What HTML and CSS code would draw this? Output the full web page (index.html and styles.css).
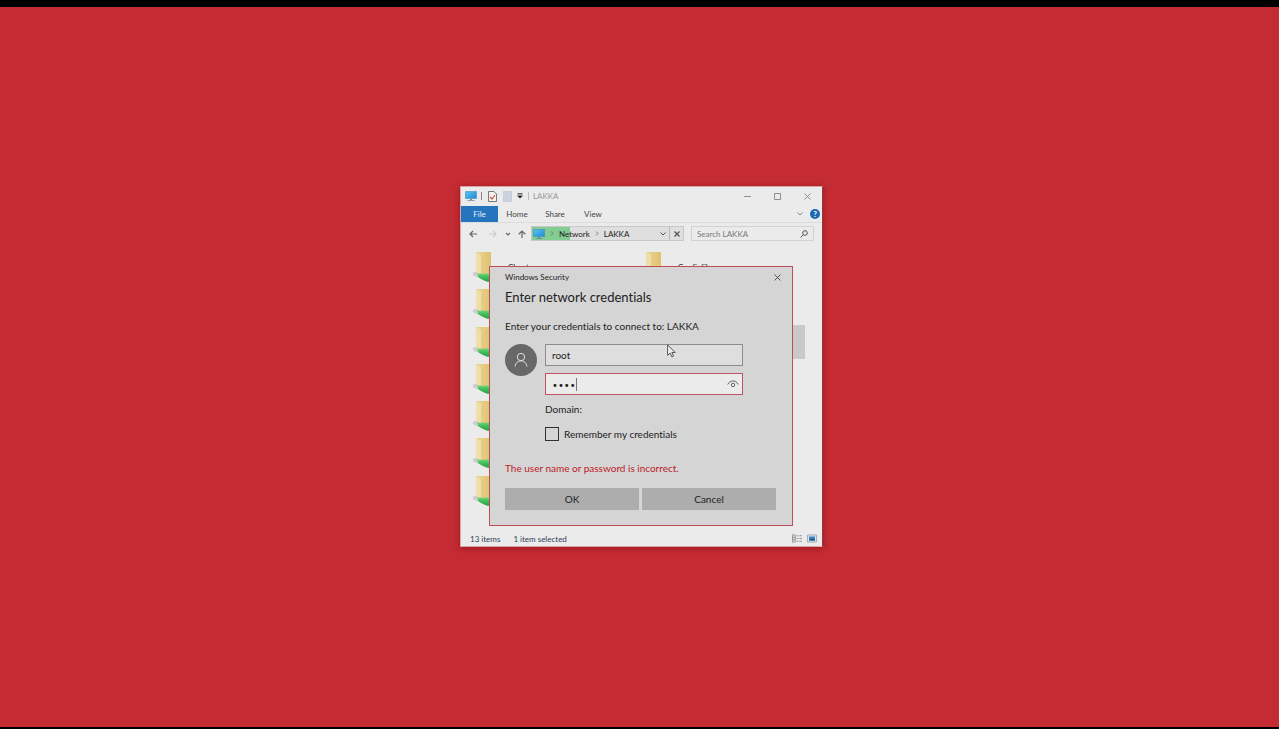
FILE: index.html
```html
<!DOCTYPE html>
<html lang="en">
<head>
<meta charset="utf-8">
<title>LAKKA</title>
<link rel="stylesheet" href="styles.css">
</head>
<body>
<svg class="defs" aria-hidden="true">
  <defs>
    <linearGradient id="blue" x1="0" y1="0" x2="1" y2="1"><stop offset="0" stop-color="#58c4ef"/><stop offset="1" stop-color="#2489cf"/></linearGradient>
    <linearGradient id="gold" x1="0" y1="0" x2="1" y2="0"><stop offset="0" stop-color="#ead594"/><stop offset="1" stop-color="#dfc26e"/></linearGradient>
    <linearGradient id="cable" x1="0" y1="0" x2="0" y2="1"><stop offset="0" stop-color="#7fd98c"/><stop offset=".5" stop-color="#3fbd58"/><stop offset="1" stop-color="#2f9b47"/></linearGradient>
    <symbol id="monitor" viewBox="0 0 12 10"><path d="M.5.5h11v7H.5z" fill="url(#blue)" stroke="#3a8fc2" stroke-width=".6"/><path d="M5 8h2v1H5zM2.500 9h7v.8h-7z" fill="#6d8797"/></symbol>
    <symbol id="folder" viewBox="0 0 32 32"><path d="M4 0h15v25H7l-3-3z" fill="url(#gold)"/><path d="M4 0l5 3v18l-5 3z" fill="#f0dea8"/></symbol>
    <symbol id="share" viewBox="0 0 32 32"><use href="#folder"/><path d="M4 20.500c3 1.500 5 1.500 8 1 3 0 6 0 7 1v7.500c-5 0-9-2-14-5.500z" fill="url(#cable)"/><path d="M1 20.500l3.500-.5 2 4.500-3 .3L.8 23z" fill="#c9cfca"/></symbol>
  </defs>
</svg>
<main class="desktop">
  <section class="explorer">
    <header class="titlebar">
      <svg class="pc" viewBox="0 0 12 10"><use href="#monitor"/></svg>
      <span class="sep"></span>
      <svg class="quick" viewBox="0 0 9 11"><path d="M.5.5h5.500l2.500 2.500v7.500h-8z" fill="#f4f1ef" stroke="#777"/><path d="M2 6l2 2 3-4" fill="none" stroke="#d0563c" stroke-width="1.200"/></svg>
      <svg class="quick" viewBox="0 0 9 11"><path d="M.5.5h8v10h-8z" fill="#ccd3e0" stroke="#c5ccda"/></svg>
      <svg class="drop" viewBox="0 0 6 6"><path d="M.5.8h5" stroke="#222"/><path d="M0 2.500h6L3 5.500z" fill="#222"/></svg>
      <span class="sep light"></span>
      <span class="title">LAKKA</span>
      <div class="window-buttons">
        <button aria-label="Minimize"><svg viewBox="0 0 7 7"><path d="M0 3.500h7"/></svg></button>
        <button aria-label="Maximize"><svg viewBox="0 0 7 7"><path d="M.5.5h6v6h-6z"/></svg></button>
        <button aria-label="Close"><svg viewBox="0 0 7 7"><path d="M.5.5l6 6m0-6l-6 6"/></svg></button>
      </div>
    </header>
    <nav class="ribbon">
      <button class="tab file">File</button><button class="tab">Home</button><button class="tab">Share</button><button class="tab">View</button>
      <svg class="chevron" viewBox="0 0 6 4"><path d="M.5.5L3 3 5.500.5"/></svg>
      <button class="help" aria-label="Help">?</button>
    </nav>
    <div class="navbar">
      <button class="arrow" aria-label="Back"><svg viewBox="0 0 8 8"><path d="M8 4H1m3-3L1 4l3 3"/></svg></button>
      <button class="arrow dim" aria-label="Forward"><svg viewBox="0 0 8 8"><path d="M0 4h7M4 1l3 3-3 3"/></svg></button>
      <button class="arrow small" aria-label="Recent locations"><svg viewBox="0 0 8 8"><path d="M2 3l2 2 2-2"/></svg></button>
      <button class="arrow up" aria-label="Up"><svg viewBox="0 0 8 8"><path d="M4 8V1M.7 4.200L4 1l3.300 3.200"/></svg></button>
      <div class="address">
        <svg class="pc" viewBox="0 0 12 10"><use href="#monitor"/></svg>
        <svg class="crumb" viewBox="0 0 4 5"><path d="M1 .5l2 2-2 2"/></svg>
        <span>Network</span>
        <svg class="crumb" viewBox="0 0 4 5"><path d="M1 .5l2 2-2 2"/></svg>
        <span>LAKKA</span>
        <svg class="chevron dark" viewBox="0 0 6 4"><path d="M.5.5L3 3 5.500.5"/></svg>
        <button class="stop" aria-label="Stop loading"><svg viewBox="0 0 6 6"><path d="M.5.5l5 5m0-5l-5 5"/></svg></button>
      </div>
      <div class="search">
        <input type="text" aria-label="Search LAKKA" placeholder="Search LAKKA">
        <svg viewBox="0 0 8 8"><circle cx="5" cy="3" r="2.300"/><path d="M3.300 4.700L.5 7.500"/></svg>
      </div>
    </div>
    <div class="files">
      <div class="item"><svg viewBox="0 0 32 32"><use href="#share"/></svg><span>Cheats</span></div>
      <div class="item"><svg viewBox="0 0 32 32"><use href="#share"/></svg><span>Configfiles</span></div>
      <div class="item"><svg viewBox="0 0 32 32"><use href="#share"/></svg></div>
      <div class="item"></div>
      <div class="item"><svg viewBox="0 0 32 32"><use href="#share"/></svg></div>
      <div class="item selected"></div>
      <div class="item"><svg viewBox="0 0 32 32"><use href="#share"/></svg></div>
      <div class="item"></div>
      <div class="item"><svg viewBox="0 0 32 32"><use href="#share"/></svg></div>
      <div class="item"></div>
      <div class="item"><svg viewBox="0 0 32 32"><use href="#share"/></svg></div>
      <div class="item"></div>
      <div class="item"><svg viewBox="0 0 32 32"><use href="#share"/></svg></div>
    </div>
    <footer class="status">
      <span>13 items</span><span>1 item selected</span>
      <div class="views">
        <svg viewBox="0 0 11 9"><path d="M.5.5h3v8h-3zM.5 3.200h3M.5 5.800h3M5 1.500h2M8 1.500h3M5 4.500h2M8 4.500h3M5 7.500h2M8 7.500h3" fill="none" stroke="#777" stroke-width=".8"/></svg>
        <svg viewBox="0 0 10 9"><path d="M.5 1h9v7h-9z" fill="#d8e3ee" stroke="#a3adb8"/><path d="M2 2.500h6v4H2z" fill="#3c86c8"/><path d="M2 6.500l3-2 3 1v1z" fill="#2c4a66"/></svg>
      </div>
    </footer>
  </section>

  <form class="dialog">
    <header class="dialog-bar"><span>Windows Security</span><button type="button" aria-label="Close"><svg viewBox="0 0 7 7"><path d="M.5.5l6 6m0-6l-6 6"/></svg></button></header>
    <h1>Enter network credentials</h1>
    <p class="lead">Enter your credentials to connect to: LAKKA</p>
    <div class="credentials">
      <svg class="avatar" viewBox="0 0 32 32"><circle cx="16" cy="16" r="16" fill="#686868"/><g fill="none" stroke="#dedede"><circle cx="16" cy="13" r="3.700"/><path d="M10 22.500c.5-3.500 3-5.700 6-5.700s5.500 2.200 6 5.700"/></g></svg>
      <div class="fields">
        <input class="box" type="text" aria-label="User name" value="root">
        <div class="box password">
          <input type="password" aria-label="Password" value="root">
          <span class="caret"></span>
          <button type="button" aria-label="Reveal password"><svg viewBox="0 0 12 8"><path d="M.7 4.500C3-.2 9-.2 11.300 4.500"/><circle cx="6" cy="5" r="1.700"/></svg></button>
        </div>
        <p class="domain">Domain:</p>
        <label class="remember"><input type="checkbox">Remember my credentials</label>
      </div>
    </div>
    <p class="error">The user name or password is incorrect.</p>
    <div class="actions"><button type="button">OK</button><button type="button">Cancel</button></div>
  </form>
  <svg class="pointer" viewBox="0 0 9 14"><path d="M.6.8v10.500l2.500-2.200 1.700 3.700 1.700-.8-1.700-3.500h3.400z" fill="#eee" stroke="#333" stroke-width=".8"/></svg>
</main>
</body>
</html>
```
FILE: styles.css
```css
* { box-sizing: border-box; }
body { margin: 0; background: #000; font-family: Lato, "Open Sans", sans-serif; font-variant-ligatures: none; color: #222; }
button, input { font: inherit; color: inherit; border: 0; padding: 0; margin: 0; background: none; border-radius: 0; outline: 0; }
button { display: flex; align-items: center; justify-content: center; }
p, h1 { margin: 0; font-weight: 400; }
svg { display: block; flex: none; }
.defs { position: absolute; width: 0; height: 0; }
.desktop { position: relative; height: 100vh; background: #c52b32; border-top: 7px solid #000; border-bottom: 2px solid #000; overflow: hidden; }

.explorer { position: absolute; left: 460px; top: 179px; width: 363px; height: 361px; display: flex; flex-direction: column; background: #ebebeb; border: 1px solid #d9a5a7; border-right-color: #943a3f; box-shadow: 0 1px 6px rgba(70, 0, 0, .4); font-size: 8px; line-height: 10px; }
.titlebar { display: flex; align-items: center; height: 19px; padding: 0 0 1px 4px; }
.pc { width: 12px; height: 10px; }
.sep { width: 1px; height: 8px; background: #888; margin: 0 6px 0 4px; }
.sep.light { background: #bbb; margin: 0 4px 0 5px; }
.quick { width: 9px; height: 11px; margin-right: 6px; }
.quick + .drop { margin-left: -1px; }
.drop { width: 6px; height: 6px; }
.title { color: #999; }
.window-buttons { display: flex; margin-left: auto; }
.window-buttons button { width: 30px; height: 18px; }
.window-buttons svg, .dialog-bar svg { width: 7px; height: 7px; fill: none; stroke: #777; stroke-width: .8; }

.ribbon { display: flex; align-items: center; height: 17px; border-bottom: 1px solid #dcdcdc; }
.tab { height: 16px; width: 38px; color: #444; }
.tab.file { width: 37px; background: #2574be; color: #e8f0f8; }
.chevron { width: 6px; height: 4px; margin-left: auto; fill: none; stroke: #888; }
.chevron.dark { margin-right: 3px; stroke: #555; }
.help { width: 10px; height: 10px; margin: 0 2px 0 7px; border-radius: 50%; background: #1c6ab5; color: #fff; font-weight: 700; }

.navbar { display: flex; align-items: center; padding: 3px 8px 0; }
.arrow { width: 8px; height: 15px; margin-right: 12px; }
.arrow svg { width: 8px; height: 8px; fill: none; stroke: #666; stroke-width: 1.2; }
.arrow.dim svg { stroke: #ccc; }
.arrow.dim { margin-right: 7px; }
.arrow.small { margin-right: 6px; }
.arrow.up { margin-right: 5px; }
.address { display: flex; flex: none; align-items: center; gap: 5px; width: 153px; height: 15px; padding-left: 1px; border: 1px solid #c8c8c8; background: linear-gradient(90deg, #83cc92 38px, #dfdfdf 38px); }
.crumb { width: 4px; height: 5px; fill: none; stroke: #666; stroke-width: .8; }
.stop { width: 14px; height: 13px; margin-left: -5px; border-left: 1px solid #bbb; }
.stop svg { width: 6px; height: 6px; stroke: #555; stroke-width: 1.3; }
.search { display: flex; align-items: center; flex: 1; min-width: 0; height: 15px; margin-left: 7px; padding: 0 5px; border: 1px solid #d2d2d2; }
.search input { flex: 1; min-width: 0; height: 13px; }
.search input::placeholder { color: #777; opacity: 1; }
.search svg { width: 8px; height: 8px; fill: none; stroke: #555; }

.files { flex: 1; display: grid; grid-template-columns: 170px 163px; grid-template-rows: repeat(7, 1fr); min-height: 0; padding: 11px 0 17px 11px; }
.item { display: flex; align-items: flex-start; gap: 4px; min-height: 0; }
.item svg { width: 32px; height: 32px; }
.item span { margin-top: 10px; }
.item.selected { background: #c9c9c9; margin: -2px 0 5px; }
.status { display: flex; align-items: center; gap: 13px; height: 16px; padding: 1px 5px 0 9px; color: #2f3d59; }
.views { display: flex; gap: 5px; margin-left: auto; }
.views svg { width: 10px; height: 9px; }

.dialog { position: absolute; left: 489px; top: 259px; width: 304px; height: 260px; padding: 0 16px 0 15px; border: 1px solid #bc4f55; background: #d5d5d5; font-size: 10px; line-height: 14px; }
.dialog-bar { display: flex; align-items: center; justify-content: space-between; height: 20px; font-size: 8px; }
.dialog-bar button { width: 7px; height: 20px; margin-right: -5px; }
.dialog-bar svg { stroke: #333; margin: auto; }
h1 { font-size: 13px; line-height: 20px; }
.lead { margin-top: 12px; }
.credentials { display: flex; gap: 8px; margin-top: 11px; }
.avatar { width: 32px; height: 32px; }
.fields { width: 198px; }
.box { display: block; width: 100%; height: 22px; padding: 0 6px; border: 1px solid #8d8d8d; background: #dedede; }
.password { display: flex; align-items: center; margin-top: 7px; padding-right: 3px; border-color: #bd5560; background: #ebebeb; }
.password input { width: 24px; height: 20px; padding-top: 2px; font: 10px/18px "DejaVu Sans", sans-serif; }
.caret { width: 1px; height: 13px; background: #777; }
.password button { margin-left: auto; }
.password svg { width: 12px; height: 8px; fill: none; stroke: #555; stroke-width: .9; }
.domain { margin-top: 7px; }
.remember { display: flex; align-items: center; gap: 5px; margin-top: 11px; }
.remember input { appearance: none; width: 14px; height: 14px; border: 1px solid #333; }
.error { margin-top: 20px; color: #bd2028; }
.actions { display: flex; gap: 3px; margin-top: 13px; }
.actions button { flex: 1; height: 22px; background: #adadad; }
.pointer { position: absolute; left: 667px; top: 337px; width: 9px; height: 14px; }
```
